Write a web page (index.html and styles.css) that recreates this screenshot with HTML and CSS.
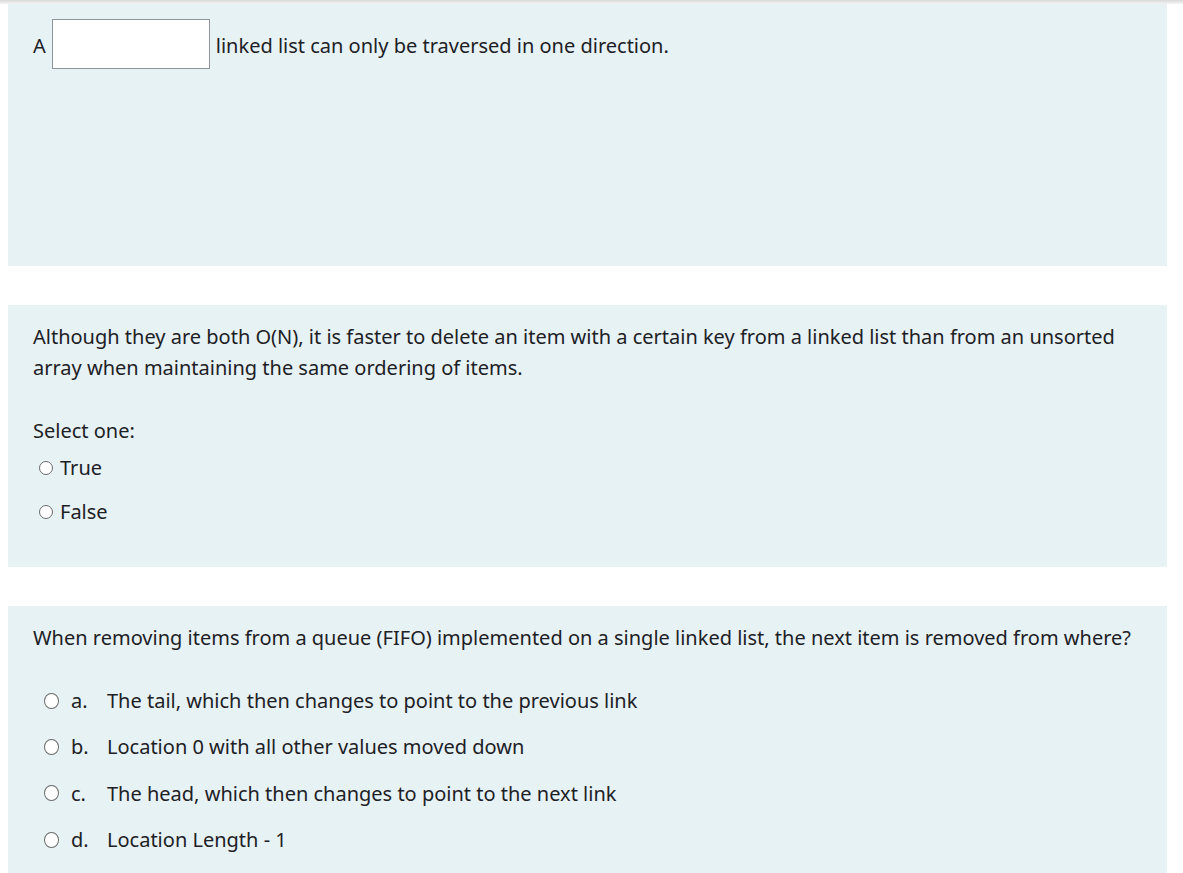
FILE: index.html
```html
<!DOCTYPE html>
<html>
<head>
<meta charset="utf-8">
<link rel="stylesheet" href="styles.css">
</head>
<body>
<div class="topline"></div>
<main class="page">
  <section class="que q1">
    <div class="fill-row">
      <span class="word">A</span>
      <span class="blank"></span>
      <span class="word">linked list can only be traversed in one direction.</span>
    </div>
  </section>

  <section class="que q2">
    <p class="qtext">Although they are both O(N), it is faster to delete an item with a certain key from a linked list than from an unsorted array when maintaining the same ordering of items.</p>
    <div class="prompt">Select one:</div>
    <div class="tf-list">
      <label class="tf"><span class="radio"></span>True</label>
      <label class="tf"><span class="radio"></span>False</label>
    </div>
  </section>

  <section class="que q3">
    <p class="qtext">When removing items from a queue (FIFO) implemented on a single linked list, the next item is removed from where?</p>
    <div class="mc-list">
      <label class="mc"><span class="radio"></span><span class="letter">a.</span><span>The tail, which then changes to point to the previous link</span></label>
      <label class="mc"><span class="radio"></span><span class="letter">b.</span><span>Location 0 with all other values moved down</span></label>
      <label class="mc"><span class="radio"></span><span class="letter">c.</span><span>The head, which then changes to point to the next link</span></label>
      <label class="mc"><span class="radio"></span><span class="letter">d.</span><span>Location Length - 1</span></label>
    </div>
  </section>
</main>
</body>
</html>
```
FILE: styles.css
```css
html, body {
  margin: 0;
  padding: 0;
  background: #ffffff;
}
body {
  font-family: "Noto Sans", "Open Sans", sans-serif;
  font-size: 20px;
  color: #1d2125;
  height: 873px;
  overflow: hidden;
}
.topline {
  height: 4px;
  background: linear-gradient(#d9d9d9, #f4f4f4);
}
.page {
  padding-left: 8px;
  width: 1159px;
  display: flex;
  flex-direction: column;
  gap: 39px;
}
.que {
  background: #e7f2f5;
  padding: 15px 25px 0 25px;
  box-sizing: border-box;
}
.q1 {
  height: 262px;
}
.fill-row {
  display: flex;
  align-items: center;
  gap: 6px;
}
.fill-row .word {
  margin-top: 3px;
}
.blank {
  display: inline-block;
  width: 156px;
  height: 48px;
  background: #ffffff;
  border: 1px solid #8f959e;
}
.q2 {
  height: 262px;
  padding-top: 16px;
}
.qtext {
  margin: 0;
  line-height: 31px;
}
.prompt {
  margin-top: 32px;
  line-height: 31px;
}
.tf-list {
  display: flex;
  flex-direction: column;
  gap: 13px;
  margin-top: 6px;
}
.tf {
  display: flex;
  align-items: center;
  line-height: 31px;
  padding-left: 6px;
}
.radio {
  display: inline-block;
  width: 12px;
  height: 12px;
  border: 1px solid #6a6a6a;
  border-radius: 50%;
  background: #ffffff;
  margin-right: 7px;
  flex: none;
}
.q3 {
  height: 267px;
  padding-top: 16px;
}
.mc-list {
  display: flex;
  flex-direction: column;
  gap: 15.4px;
  margin-top: 32px;
}
.mc {
  display: flex;
  align-items: center;
  line-height: 31px;
  padding-left: 11px;
}
.mc .radio {
  width: 13px;
  height: 14px;
  margin-right: 12px;
}
.mc .letter {
  width: 36px;
  flex: none;
}
```
